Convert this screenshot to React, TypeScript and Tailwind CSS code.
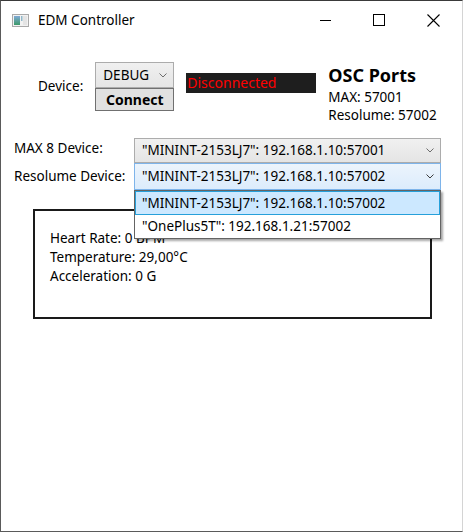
import React from "react"

const font = { fontFamily: '"Noto Sans", "Open Sans", sans-serif' }

function Chevron({ dark = false }: { dark?: boolean }) {
  return (
    <svg width="8" height="5" viewBox="0 0 8 5" className="shrink-0">
      <path d="M0.5 0.5 L4 4 L7.5 0.5" fill="none" stroke={dark ? "#3c3c3c" : "#6d6d6d"} strokeWidth="1" />
    </svg>
  )
}

function AppIcon() {
  return (
    <svg width="17" height="13" viewBox="0 0 17 13">
      <defs>
        <linearGradient id="pane" x1="0" y1="0" x2="0" y2="1">
          <stop offset="0" stopColor="#7fa9d6" />
          <stop offset="1" stopColor="#3d9a6a" />
        </linearGradient>
      </defs>
      <rect x="0.5" y="0.5" width="16" height="12" fill="#f2f2f2" stroke="#a9a9a9" />
      <rect x="2" y="2" width="6" height="9" fill="url(#pane)" />
      <rect x="9" y="2" width="1.5" height="5" fill="#8fb7c9" />
      <rect x="11" y="2" width="4" height="9" fill="#e4e4e4" />
    </svg>
  )
}

function TitleBar() {
  return (
    <div className="flex h-[38px] items-center">
      <div className="ml-[11px] flex items-center">
        <AppIcon />
      </div>
      <span className="ml-[9px] text-[13.5px] text-black">EDM Controller</span>
      <div className="ml-auto flex h-full items-center">
        <div className="flex h-full w-[46px] items-center justify-center">
          <div className="h-px w-[11px] bg-black" />
        </div>
        <div className="ml-[8px] flex h-full w-[46px] items-center justify-center">
          <div className="h-[12px] w-[12px] border border-black" />
        </div>
        <div className="ml-[8px] mr-[6px] flex h-full w-[46px] items-center justify-center">
          <svg width="13" height="13" viewBox="0 0 13 13">
            <path d="M0.5 0.5 L12.5 12.5 M12.5 0.5 L0.5 12.5" stroke="#000" strokeWidth="1.1" />
          </svg>
        </div>
      </div>
    </div>
  )
}

function DeviceCombo({
  value,
  focused = false,
}: {
  value: string
  focused?: boolean
}) {
  return (
    <div
      className={`flex h-full items-center justify-between border pl-[7px] pr-[6px] text-[13.5px] text-black ${
        focused
          ? "border-[#7eb4ea] bg-gradient-to-b from-[#ecf4fc] to-[#dcecfc]"
          : "border-[#acacac] bg-gradient-to-b from-[#f0f0f0] to-[#e5e5e5]"
      }`}
    >
      <span className="whitespace-nowrap">{value}</span>
      <Chevron dark={focused} />
    </div>
  )
}

export default function App() {
  return (
    <div
      className="relative h-[532px] w-[463px] overflow-hidden border-t border-l border-b border-r border-t-[#3a3a3a] border-l-[#5a5a5a] border-b-[#5a5a5a] border-r-[#d4d4d4] bg-white"
      style={font}
    >
      <TitleBar />

      {/* Device / connection row */}
      <div className="mt-[23px] flex h-[76px] items-start">
        <div className="ml-[37px] flex h-[49px] items-center">
          <span className="text-[13.5px] text-black">Device:</span>
        </div>
        <div className="ml-[12px] flex w-[79px] flex-col">
          <div className="h-[26px]">
            <DeviceCombo value="DEBUG" />
          </div>
          <button className="h-[23px] border border-[#707070] bg-[#e1e1e1] text-[14px] font-bold leading-none text-black">
            Connect
          </button>
        </div>
        <div className="ml-[12px] mt-[11px] flex h-[20px] w-[130px] items-center bg-[#1e1e1e] pl-px">
          <span className="text-[14px] leading-none text-[#ff0000]">Disconnected</span>
        </div>
        <div className="ml-[12px] mt-[1px] flex flex-col text-[13.5px] leading-[18px] text-black">
          <span className="text-[18px] font-bold leading-[25px]">OSC Ports</span>
          <span>MAX: 57001</span>
          <span>Resolume: 57002</span>
        </div>
      </div>

      {/* OSC device selection */}
      <div className="flex flex-col">
        <div className="flex h-[25px] items-start">
          <span className="ml-[13px] w-[120px] text-[13.5px] leading-[20px] text-black">MAX 8 Device:</span>
          <div className="h-[25px] w-[307px]">
            <DeviceCombo value={'"MININT-2153LJ7": 192.168.1.10:57001'} />
          </div>
        </div>
        <div className="flex h-[27px] items-start">
          <span className="ml-[13px] mt-[2px] w-[120px] text-[13.5px] leading-[22px] text-black">Resolume Device:</span>
          <div className="relative h-[27px] w-[307px]">
            <DeviceCombo value={'"MININT-2153LJ7": 192.168.1.10:57002'} focused />
            <div className="absolute left-0 top-[27px] z-10 w-[307px] border border-[#646464] bg-white shadow-[2px_2px_2px_rgba(0,0,0,0.35)]">
              <div className="flex h-[24px] items-center border border-[#26a0da] bg-[#cce8ff] pl-[6px] text-[13.5px] text-black">
                "MININT-2153LJ7": 192.168.1.10:57002
              </div>
              <div className="flex h-[23px] items-center pl-[7px] text-[13.5px] text-black">
                "OnePlus5T": 192.168.1.21:57002
              </div>
            </div>
          </div>
        </div>
      </div>

      {/* Sensor readings */}
      <div className="ml-[32px] mt-[19px] h-[110px] w-[399px] border-2 border-[#1a1a1a] pl-[15px] pt-[18px]">
        <div className="flex flex-col text-[13.5px] leading-[19px] text-black">
          <span>Heart Rate: 0 BPM</span>
          <span>Temperature: 29,00°C</span>
          <span>Acceleration: 0 G</span>
        </div>
      </div>
    </div>
  )
}
